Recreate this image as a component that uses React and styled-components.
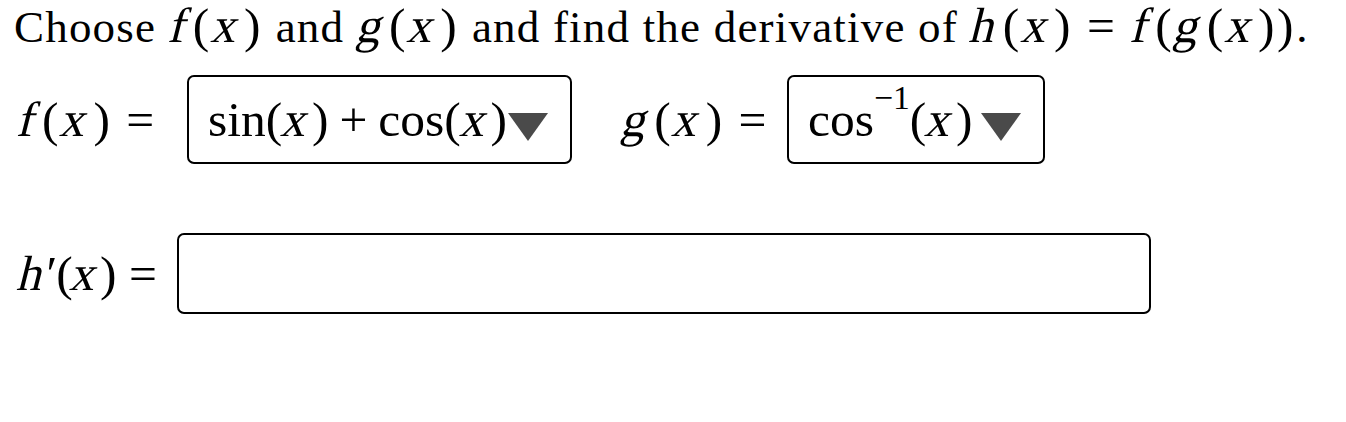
import React from "react";
import styled, { createGlobalStyle } from "styled-components";

const Global = createGlobalStyle`
  html, body { margin: 0; padding: 0; background: #fff; }
  body { font-family: "Liberation Serif", "Times New Roman", serif; color: #000; }
`;

const Page = styled.div`
  padding: 0 0 0 14px;
  width: 1346px;
  height: 422px;
  box-sizing: border-box;
  font-size: 45px;
  font-family: "Liberation Serif", "Times New Roman", serif;
`;

const Title = styled.div`
  line-height: 52px;
  white-space: nowrap;
  letter-spacing: 1.2px;
`;

const MathText = styled.span`
  font-family: "Liberation Serif", "Times New Roman", serif;
  font-size: 1.1em;
  letter-spacing: ${(p) => (p.$ls ?? 2.6)}px;
  white-space: nowrap;
`;

/* math italic: slanted Liberation Serif (no italic face is installed) */
const Var = styled.span`
  display: inline-block;
  font-family: "Liberation Serif", "Times New Roman", serif;
  font-style: normal;
  transform: skewX(-14deg);
  padding: 0 0.06em 0 0.04em;
`;

const Fn = styled.span`
  letter-spacing: 0;
`;

const Rel = styled.span`
  margin: 0 0.2778em;
`;

const Bin = styled.span`
  margin: 0 0.2222em;
`;

const Row = styled.div`
  display: flex;
  align-items: center;
  margin-top: ${(p) => p.$top}px;
  white-space: nowrap;
`;

const Label = styled.div`
  flex: none;
  box-sizing: border-box;
  width: ${(p) => p.$w}px;
  padding-left: ${(p) => p.$left || 0}px;
`;

const Select = styled.div`
  flex: none;
  display: flex;
  align-items: center;
  box-sizing: border-box;
  width: ${(p) => p.$w}px;
  height: 89px;
  border: 2px solid #000;
  border-radius: 7px;
  padding: 0 22px 0 19px;
  margin-right: ${(p) => p.$right || 0}px;
`;

const Caret = styled.span`
  flex: none;
  width: 0;
  height: 0;
  margin-left: auto;
  margin-top: 14px;
  border-left: 20px solid transparent;
  border-right: 20px solid transparent;
  border-top: 28px solid #4a4a4a;
`;

const Sup = styled.sup`
  font-size: 0.68em;
  vertical-align: 0.8em;
  line-height: 0;
`;

const Answer = styled.div`
  flex: none;
  box-sizing: border-box;
  width: 974px;
  height: 81px;
  border: 2px solid #000;
  border-radius: 7px;
`;

const X = () => <Var>x</Var>;

export default function App() {
  return (
    <>
      <Global />
      <Page>
        <Title>
          Choose{" "}
          <MathText>
            <Var>f</Var>(<X />)
          </MathText>{" "}
          and{" "}
          <MathText>
            <Var>g</Var>(<X />)
          </MathText>{" "}
          and find the derivative of{" "}
          <MathText>
            <Var>h</Var>(<X />)<Rel>=</Rel><Var>f</Var>(<Var>g</Var>(<X />))
          </MathText>
          .
        </Title>
        <Row $top={22}>
          <Label $w={173} $left={4}>
            <MathText>
              <Var>f</Var>(<X />)<Rel>=</Rel>
            </MathText>
          </Label>
          <Select $w={385} $right={50}>
            <MathText $ls={0}>
              <Fn>sin</Fn>(<X />)<Bin>+</Bin><Fn>cos</Fn>(<X />)
            </MathText>
            <Caret />
          </Select>
          <Label $w={165}>
            <MathText>
              <Var>g</Var>(<X />)<Rel>=</Rel>
            </MathText>
          </Label>
          <Select $w={258}>
            <MathText $ls={0}>
              <Fn>cos</Fn>
              <Sup>−1</Sup>(<X />)
            </MathText>
            <Caret />
          </Select>
        </Row>
        <Row $top={69}>
          <Label $w={163} $left={4}>
            <MathText $ls={-1.2}>
              <Var>h</Var>′(<X />)<Rel>=</Rel>
            </MathText>
          </Label>
          <Answer />
        </Row>
      </Page>
    </>
  );
}
